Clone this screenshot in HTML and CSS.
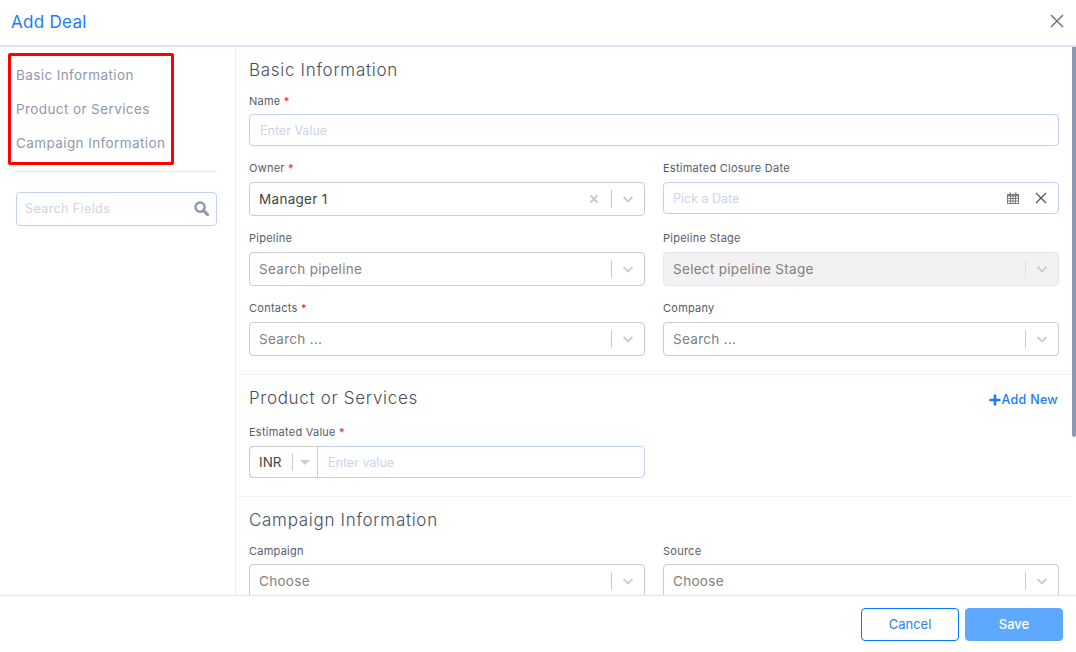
FILE: index.html
```html
<!DOCTYPE html>
<html lang="en">
<head>
    <meta charset="UTF-8">
    <title>Add Deal</title>
    <link rel="stylesheet" href="styles.css">
</head>
<body>
    <svg class="sprite" width="0" height="0">
        <symbol id="chevron" viewBox="0 0 20 20"><path d="M4.500 7.500 10 13l5.500-5.500" fill="none" stroke="currentColor" stroke-width="2.400"/></symbol>
        <symbol id="cross" viewBox="0 0 20 20"><path d="M5 5l10 10M15 5 5 15" fill="none" stroke="currentColor" stroke-width="2.800"/></symbol>
    </svg>
    <div class="modal">
        <header class="modal-header">
            <h1>Add Deal</h1>
            <svg class="close-icon" viewBox="0 0 14 14"><path d="M1 1l12 12M13 1 1 13" fill="none" stroke="currentColor" stroke-width="1.500"/></svg>
        </header>
        <div class="modal-body">
            <aside class="sidebar">
                <nav class="side-nav">
                    <a>Basic Information</a>
                    <a>Product or Services</a>
                    <a>Campaign Information</a>
                </nav>
                <hr class="side-rule">
                <div class="field-search">
                    <span>Search Fields</span>
                    <svg viewBox="0 0 16 16"><circle cx="6.500" cy="6.500" r="4.900" fill="none" stroke="currentColor" stroke-width="2.600"/><path d="M10 10l4.500 4.500" stroke="currentColor" stroke-width="3.200" stroke-linecap="round"/></svg>
                </div>
            </aside>
            <main class="content">
                <section class="section basic">
                    <h2>Basic Information</h2>
                    <div class="field name-field">
                        <label>Name <b>*</b></label>
                        <div class="input placeholder">Enter Value</div>
                    </div>
                    <div class="grid">
                        <div class="field">
                            <label>Owner <b>*</b></label>
                            <div class="select filled">
                                <span class="value">Manager 1</span>
                                <svg class="clear"><use href="#cross"/></svg>
                                <i class="sep"></i>
                                <svg class="chev"><use href="#chevron"/></svg>
                            </div>
                        </div>
                        <div class="field">
                            <label>Estimated Closure Date</label>
                            <div class="input placeholder date">
                                <span class="value">Pick a Date</span>
                                <svg class="cal" viewBox="0 0 12 12"><path fill="currentColor" d="M0 2h2.500V.5h1.500V2h4V.5h1.500V2H12v10H0zM1 4.500v1.500h2V4.500zm3 0v1.500h1.500V4.500zm2.500 0v1.500H8V4.500zm2.500 0v1.500h2V4.500zM1 7v1.500h2V7zm3 0v1.500h1.500V7zm2.500 0v1.500H8V7zM9 7v1.500h2V7zM1 9.500V11h2V9.500zm3 0V11h1.500V9.500zm2.500 0V11H8V9.500zm2.500 0V11h2V9.500z"/></svg>
                                <svg class="date-x" viewBox="0 0 12 12"><path d="M1 1l10 10M11 1 1 11" fill="none" stroke="currentColor" stroke-width="1.300"/></svg>
                            </div>
                        </div>
                        <div class="field">
                            <label>Pipeline</label>
                            <div class="select">
                                <span class="value">Search pipeline</span>
                                <i class="sep"></i>
                                <svg class="chev"><use href="#chevron"/></svg>
                            </div>
                        </div>
                        <div class="field">
                            <label>Pipeline Stage</label>
                            <div class="select disabled">
                                <span class="value">Select pipeline Stage</span>
                                <i class="sep"></i>
                                <svg class="chev"><use href="#chevron"/></svg>
                            </div>
                        </div>
                        <div class="field">
                            <label>Contacts <b>*</b></label>
                            <div class="select">
                                <span class="value">Search ...</span>
                                <i class="sep"></i>
                                <svg class="chev"><use href="#chevron"/></svg>
                            </div>
                        </div>
                        <div class="field">
                            <label>Company</label>
                            <div class="select">
                                <span class="value">Search ...</span>
                                <i class="sep"></i>
                                <svg class="chev"><use href="#chevron"/></svg>
                            </div>
                        </div>
                    </div>
                </section>
                <section class="section product">
                    <div class="section-head">
                        <h2>Product or Services</h2>
                        <a class="add-new"><svg viewBox="0 0 12 12"><path d="M6 .5v11M.5 6h11" stroke="currentColor" stroke-width="2.600"/></svg>Add New</a>
                    </div>
                    <div class="grid">
                        <div class="field">
                            <label>Estimated Value <b>*</b></label>
                            <div class="money">
                                <div class="currency">
                                    <span>INR</span>
                                    <i class="sep"></i>
                                    <i class="caret"></i>
                                </div>
                                <div class="amount">Enter value</div>
                            </div>
                        </div>
                    </div>
                </section>
                <section class="section campaign">
                    <h2>Campaign Information</h2>
                    <div class="grid">
                        <div class="field">
                            <label>Campaign</label>
                            <div class="select">
                                <span class="value">Choose</span>
                                <i class="sep"></i>
                                <svg class="chev"><use href="#chevron"/></svg>
                            </div>
                        </div>
                        <div class="field">
                            <label>Source</label>
                            <div class="select">
                                <span class="value">Choose</span>
                                <i class="sep"></i>
                                <svg class="chev"><use href="#chevron"/></svg>
                            </div>
                        </div>
                    </div>
                </section>
                <div class="scroll-thumb"></div>
            </main>
        </div>
        <footer class="modal-footer">
            <button class="btn btn-outline">Cancel</button>
            <button class="btn btn-primary">Save</button>
        </footer>
    </div>
</body>
</html>
```

FILE: styles.css
```css
* {
    box-sizing: border-box;
}

html, body {
    height: 100%;
}

body {
    margin: 0;
    background: #fff;
    color: #3d4457;
    font-family: Inter, Roboto, "Liberation Sans", sans-serif;
    overflow: hidden;
}

.sprite {
    position: absolute;
}

.modal {
    display: flex;
    flex-direction: column;
    height: 652px;
}

.modal-header {
    display: flex;
    flex: none;
    align-items: center;
    justify-content: space-between;
    height: 47px;
    padding: 0 12px 1px 11px;
    border-bottom: 2px solid #dfe3f5;
}

.modal-header h1 {
    margin: 0;
    color: #1a7cf5;
    font-size: 17px;
    font-weight: 400;
    letter-spacing: 0.3px;
}

.close-icon {
    width: 14px;
    height: 14px;
    margin-bottom: 2px;
    color: #757575;
}

.modal-body {
    display: flex;
    flex: 1;
    min-height: 0;
}

.sidebar {
    flex: none;
    width: 236px;
    padding: 6px 18px 0 8px;
    border-right: 1px solid #eceef6;
}

.side-nav {
    display: flex;
    flex-direction: column;
    width: 166px;
    padding: 2px 5px;
    border: 3px solid #f00;
    border-radius: 2px;
}

.side-nav a {
    color: #8f98ad;
    font-size: 13.500px;
    line-height: 34px;
    letter-spacing: 0.4px;
    white-space: nowrap;
}

.side-rule {
    width: 201px;
    height: 1px;
    margin: 6px 0 20px 8px;
    border: 0;
    background: #dfe3ea;
}

.field-search {
    display: flex;
    align-items: center;
    justify-content: space-between;
    width: 201px;
    height: 34px;
    margin-left: 8px;
    padding: 0 7px 2px 8px;
    border: 1px solid #c3d0f0;
    border-radius: 4px;
    color: #d0d4de;
    font-size: 12.500px;
    letter-spacing: 0.4px;
}

.field-search svg {
    width: 15px;
    height: 15px;
    color: #8f98ad;
}

.content {
    position: relative;
    flex: 1;
    min-width: 0;
    padding-right: 4px;
    overflow: hidden;
}

.scroll-thumb {
    position: absolute;
    top: 0;
    right: 0;
    width: 4px;
    height: 390px;
    border-radius: 0 0 2px 2px;
    background: #8f98b0;
}

.section {
    padding: 12px 13px 0;
    border-bottom: 1px solid #f0f3fb;
}

.section.basic {
    height: 328px;
}

.section.product {
    height: 122px;
}

.section.campaign {
    height: 320px;
    border-bottom: 0;
}

.section h2 {
    margin: 0 0 13px;
    color: #4a4f5c;
    font-size: 17px;
    font-weight: 300;
    line-height: 22px;
    letter-spacing: 0.7px;
}

.section-head {
    display: flex;
    align-items: flex-start;
    justify-content: space-between;
    margin-bottom: 3px;
}

.add-new {
    display: flex;
    align-items: center;
    margin-top: 5px;
    margin-right: 1px;
    color: #1a7cf5;
    font-size: 12.500px;
    font-weight: 500;
    letter-spacing: 0.3px;
}

.add-new svg {
    width: 12px;
    height: 12px;
}

.grid {
    display: grid;
    grid-template-columns: 396px 396px;
    column-gap: 18px;
    row-gap: 15px;
}

.name-field {
    margin-bottom: 15px;
}

.field label {
    display: block;
    height: 21px;
    color: #565c6b;
    font-size: 11px;
    line-height: 14px;
    letter-spacing: 0.25px;
}

.name-field label,
.campaign .field label {
    height: 20px;
}

.field label b {
    color: #e0243a;
    font-weight: 400;
}

.input {
    display: flex;
    align-items: center;
    height: 32px;
    padding: 0 10px;
    border: 1px solid #c3d0f0;
    border-radius: 4px;
    font-size: 12.500px;
}

.placeholder {
    color: #cdd3ee;
}

.date {
    padding-left: 9px;
}

.date .value {
    flex: 1;
}

.cal {
    width: 12px;
    height: 12px;
    margin-right: 16px;
    color: #7d7d7d;
}

.date-x {
    width: 12px;
    height: 12px;
    margin-right: 1px;
    color: #555;
}

.select {
    display: flex;
    align-items: center;
    height: 34px;
    padding: 0 8px 0 9px;
    border: 1px solid #ccc;
    border-radius: 4px;
    color: #808080;
    font-size: 13.500px;
    letter-spacing: 0.3px;
}

.select.filled {
    color: #444;
}

.select.disabled {
    border-color: #e6e6e6;
    background: #f2f2f2;
}

.select .value {
    flex: 1;
}

.clear {
    width: 14px;
    height: 14px;
    margin-right: 10px;
    color: #ccc;
}

.sep {
    width: 1px;
    height: 18px;
    background: #ccc;
}

.select.disabled .sep {
    background: #e0e0e0;
}

.chev {
    width: 16px;
    height: 16px;
    margin-left: 8px;
    color: #ccc;
}

.money {
    display: flex;
    height: 32px;
    border: 1px solid #c3d0f0;
    border-radius: 4px;
}

.currency {
    display: flex;
    flex: none;
    align-items: center;
    width: 69px;
    margin: -1px 0 -1px -1px;
    padding-left: 9px;
    border: 1px solid #ccc;
    border-radius: 4px 0 0 4px;
    color: #444;
    font-size: 13.500px;
}

.currency .sep {
    margin-left: 10px;
}

.caret {
    margin: 0 0 0 7px;
    border-top: 5px solid #ccc;
    border-left: 5px solid transparent;
    border-right: 5px solid transparent;
}

.amount {
    padding: 1px 0 0 10px;
    color: #cdd3ee;
    font-size: 12.500px;
    line-height: 30px;
}

.modal-footer {
    display: flex;
    flex: none;
    justify-content: flex-end;
    gap: 6px;
    height: 57px;
    padding: 12px 13px 0 0;
    border-top: 1px solid #dfe3f5;
    background: #fff;
}

.btn {
    width: 98px;
    height: 33px;
    padding: 0 0 2px;
    border-radius: 4px;
    font-family: inherit;
    font-size: 13px;
}

.btn-outline {
    border: 1px solid #007bff;
    background: #fff;
    color: #2f80f0;
}

.btn-primary {
    border: 1px solid #5fa8ff;
    background: #5fa8ff;
    color: #fff;
    font-weight: 500;
}
```
